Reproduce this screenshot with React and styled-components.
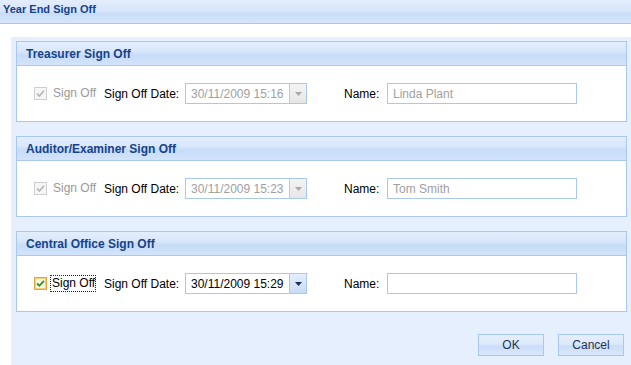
import React from "react";
import styled, { createGlobalStyle } from "styled-components";

const Global = createGlobalStyle`
  html, body { margin: 0; padding: 0; background: #fff; }
  body { font-family: "Liberation Sans", Arial, sans-serif; font-size: 12px; overflow: hidden; }
`;

const Window = styled.div`
  width: 631px;
  height: 365px;
  display: flex;
  flex-direction: column;
  background: #fff;
`;

const TitleBar = styled.div`
  box-sizing: border-box;
  height: 24px;
  border-bottom: 1px solid #a9c6ee;
  background: linear-gradient(#e3edfc 0%, #d8e6fa 45%, #c9ddf8 60%, #d6e5fa 100%);
  display: flex;
  align-items: flex-start;
  padding: 3px 0 0 3px;
  font-weight: bold;
  font-size: 11px;
  color: #15428b;
`;

const Body = styled.div`
  flex: 1;
  margin: 13px 0 0 11px;
  background: #e5effe;
  padding: 4px 0 0 5px;
  display: flex;
  flex-direction: column;
`;

const FieldSet = styled.section`
  width: 611px;
  box-sizing: border-box;
  border: 1px solid #a8c8f0;
  background: #fff;
  margin-bottom: 14px;
`;

const SetHeader = styled.div`
  height: 24px;
  box-sizing: border-box;
  border-bottom: 1px solid #a8c8f0;
  background: linear-gradient(#e3eefd 0%, #d9e7fb 40%, #c6dcf8 58%, #d3e4fb 100%);
  padding: 5px 0 0 9px;
  font-weight: bold;
  font-size: 12px;
  color: #15428b;
`;

const Row = styled.div`
  height: 55px;
  display: flex;
  align-items: center;
  padding-left: 17px;
`;

const CheckWrap = styled.label`
  display: flex;
  align-items: center;
  width: 70px;
  flex: none;
  color: ${(p) => (p.$disabled ? "#9a9a9a" : "#000")};
`;

const CheckText = styled.span`
  margin-left: ${(p) => (p.$focus ? "3px" : "4px")};
  padding: 0 0 0 1px;
  line-height: 15px;
  border: 1px dotted ${(p) => (p.$focus ? "#222" : "transparent")};
`;

const Label = styled.span`
  color: #000;
  width: ${(p) => p.$w}px;
  flex: none;
`;

const Combo = styled.div`
  width: 122px;
  height: 21px;
  flex: none;
  box-sizing: border-box;
  border: 1px solid #a8c8f0;
  display: flex;
  background: #fff;
  margin-right: 37px;
`;

const ComboText = styled.div`
  flex: 1;
  padding: 3px 0 0 5px;
  color: ${(p) => (p.$disabled ? "#a0a0a0" : "#000")};
`;

const Trigger = styled.div`
  width: 17px;
  box-sizing: border-box;
  border-left: 1px solid ${(p) => (p.$disabled ? "#c8c8c8" : "#a8c8f0")};
  background: ${(p) =>
    p.$disabled
      ? "linear-gradient(#f4f4f4, #e6e6e6)"
      : "linear-gradient(#e4eefc, #c9dcf6)"};
  display: flex;
  align-items: center;
  justify-content: center;
`;

const TextInput = styled.div`
  width: 190px;
  height: 21px;
  flex: none;
  box-sizing: border-box;
  border: 1px solid #a8c8f0;
  padding: 3px 0 0 5px;
  color: #a0a0a0;
  background: #fff;
`;

const Buttons = styled.div`
  display: flex;
  justify-content: flex-end;
  gap: 14px;
  width: 608px;
  margin-top: 8px;
`;

const Button = styled.button`
  width: 66px;
  height: 22px;
  box-sizing: border-box;
  border: 1px solid #a8c8f0;
  background: linear-gradient(#e6effd 0%, #dce9fb 45%, #cadef8 55%, #d8e7fb 100%);
  font-family: "Liberation Sans", Arial, sans-serif;
  font-size: 12px;
  color: #1f3350;
  padding: 0;
`;

const CheckBox = ({ disabled }) =>
  disabled ? (
    <svg width="13" height="13" viewBox="0 0 13 13">
      <rect x="0.5" y="0.5" width="12" height="12" fill="#f6f6f6" stroke="#cfcfcf" />
      <path d="M3 6.5 L5.3 9 L10 3.8" fill="none" stroke="#b4b4b4" strokeWidth="1.6" />
    </svg>
  ) : (
    <svg width="13" height="13" viewBox="0 0 13 13">
      <rect x="0.5" y="0.5" width="12" height="12" fill="#fdf6e4" stroke="#e3a53a" />
      <rect x="1.5" y="1.5" width="10" height="10" fill="none" stroke="#f6cf7a" />
      <path d="M3 6.3 L5.3 8.8 L10 3.8" fill="none" stroke="#1e9a1e" strokeWidth="1.8" />
    </svg>
  );

const Arrow = ({ disabled }) => (
  <svg width="7" height="4" viewBox="0 0 7 4">
    <path d="M0 0 H7 L3.5 4 Z" fill={disabled ? "#a8a8a8" : "#15305e"} />
  </svg>
);

const sections = [
  { title: "Treasurer Sign Off", date: "30/11/2009 15:16", name: "Linda Plant", disabled: true },
  { title: "Auditor/Examiner Sign Off", date: "30/11/2009 15:23", name: "Tom Smith", disabled: true },
  { title: "Central Office Sign Off", date: "30/11/2009 15:29", name: "", disabled: false },
];

export default function App() {
  return (
    <>
      <Global />
      <Window>
        <TitleBar>Year End Sign Off</TitleBar>
        <Body>
          {sections.map((s) => (
            <FieldSet key={s.title}>
              <SetHeader>{s.title}</SetHeader>
              <Row>
                <CheckWrap $disabled={s.disabled}>
                  <CheckBox disabled={s.disabled} />
                  <CheckText $focus={!s.disabled}>Sign Off</CheckText>
                </CheckWrap>
                <Label $w={81}>Sign Off Date:</Label>
                <Combo>
                  <ComboText $disabled={s.disabled}>{s.date}</ComboText>
                  <Trigger $disabled={s.disabled}>
                    <Arrow disabled={s.disabled} />
                  </Trigger>
                </Combo>
                <Label $w={43}>Name:</Label>
                <TextInput>{s.name}</TextInput>
              </Row>
            </FieldSet>
          ))}
          <Buttons>
            <Button>OK</Button>
            <Button>Cancel</Button>
          </Buttons>
        </Body>
      </Window>
    </>
  );
}
